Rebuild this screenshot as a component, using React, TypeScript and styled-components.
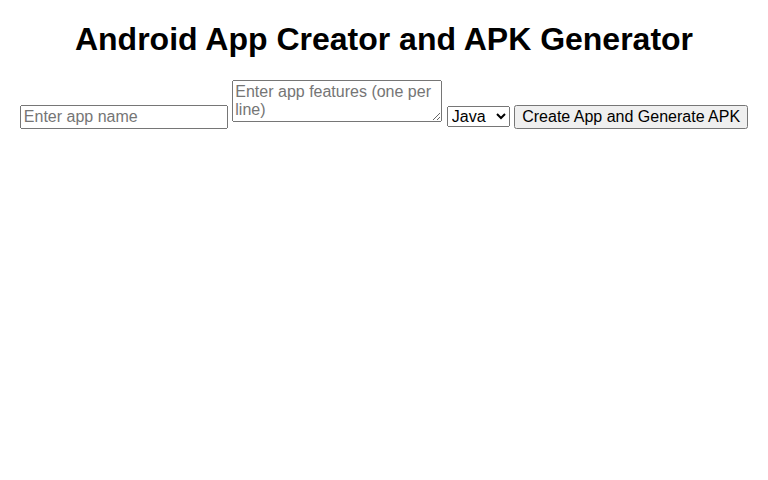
import * as React from 'react'
import styled, { createGlobalStyle } from 'styled-components'

const GlobalStyle = createGlobalStyle`
    body {
        margin: 0;
        font-family: "Liberation Sans", Arial, sans-serif;
        background: #fff;
        color: #000;
    }
`

const Page = styled.div`
    text-align: center;
`

const Title = styled.h1`
    font-size: 32px;
    margin: 21.44px 0;
`

const Form = styled.div`
    font-size: 16px;
`

const NameInput = styled.input`
    font: inherit;
    box-sizing: border-box;
    width: 208px;
`

const Features = styled.textarea`
    font: inherit;
    box-sizing: border-box;
    width: 210px;
    vertical-align: baseline;
`

const LangSelect = styled.select`
    font: inherit;
    box-sizing: border-box;
    width: 63px;
`

const CreateButton = styled.button`
    font: inherit;
`

const App = () => {
    const [name, setName] = React.useState('')
    const [features, setFeatures] = React.useState('')
    const [lang, setLang] = React.useState('java')

    return (
        <Page>
            <GlobalStyle />
            <Title>Android App Creator and APK Generator</Title>
            <Form>
                <NameInput
                    type="text"
                    placeholder="Enter app name"
                    value={name}
                    onChange={e => setName(e.target.value)}
                />{' '}
                <Features
                    placeholder="Enter app features (one per line)"
                    value={features}
                    onChange={e => setFeatures(e.target.value)}
                />{' '}
                <LangSelect value={lang} onChange={e => setLang(e.target.value)}>
                    <option value="java">Java</option>
                    <option value="kotlin">Kotlin</option>
                </LangSelect>{' '}
                <CreateButton>Create App and Generate APK</CreateButton>
            </Form>
        </Page>
    )
}

export default App
